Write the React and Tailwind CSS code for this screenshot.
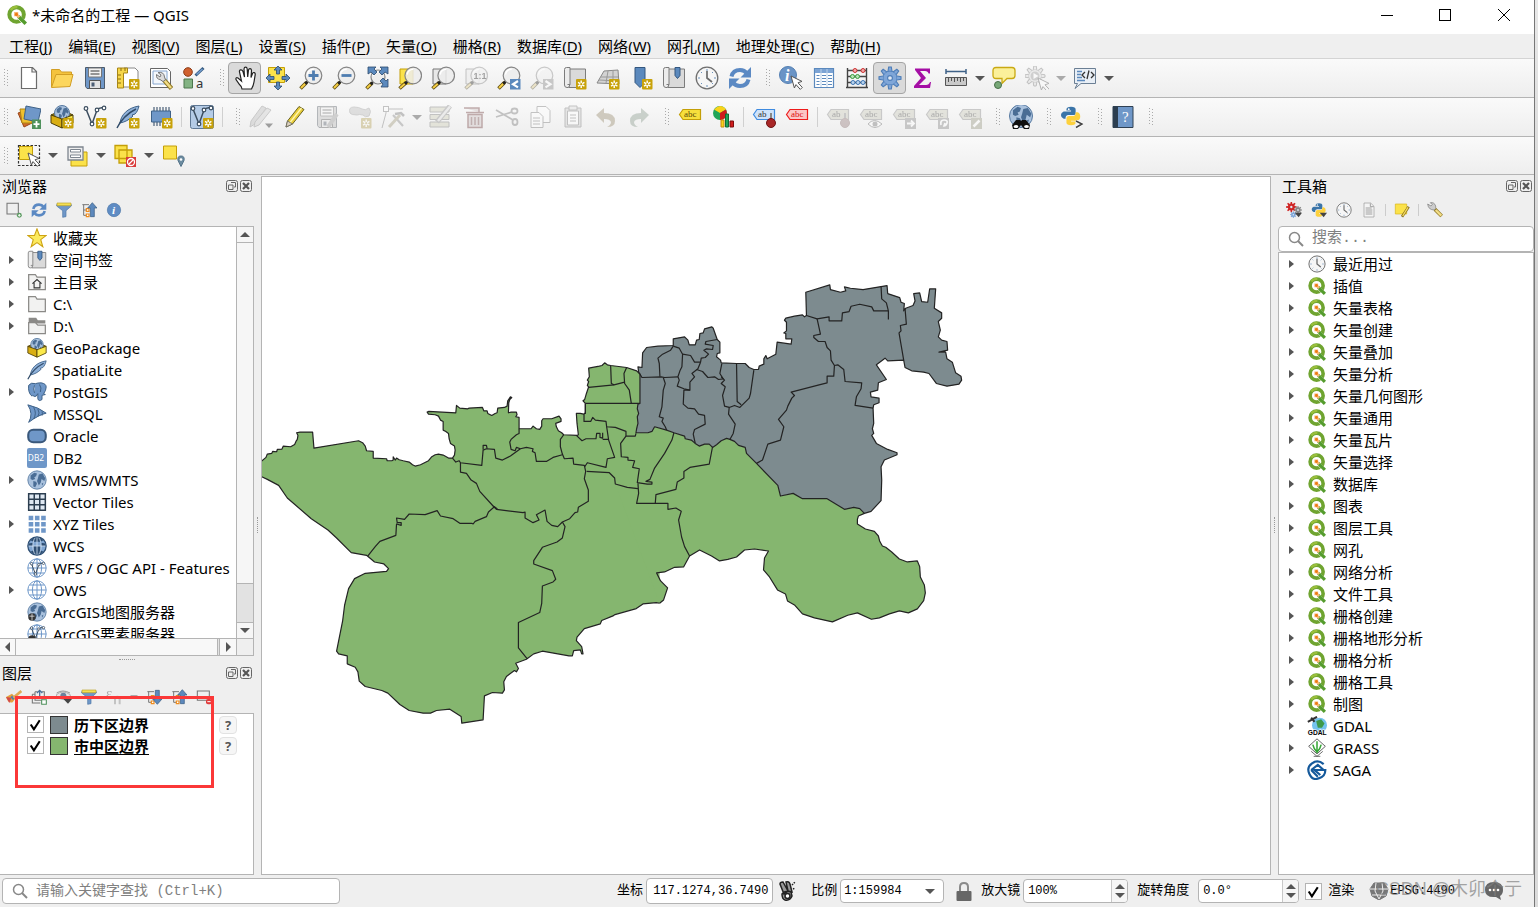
import { useState } from 'react';

const GREEN = '#85b66f';
const GREY = '#7d8b8f';

/* ---------- shared drawing parts ---------- */

function Badge({ x = 13, y = 13 }) {
  return (
    <g transform={`translate(${x} ${y})`}>
      <rect width="10.5" height="10.5" rx="1" fill="#c8a20a" />
      <path d="M5.2 1.5v7.5M2 3.4l6.4 3.7M8.4 3.4L2 7.1" stroke="#fff" strokeWidth="1.4" />
      <circle cx="5.2" cy="5.2" r="1.1" fill="#c8a20a" />
    </g>
  );
}

function Lens({ cx = 14.5, cy = 9.5, r = 8.3, children }) {
  const hx = cx - r * 0.7;
  const hy = cy + r * 0.7;
  return (
    <g>
      <path d={`M${hx - 1} ${hy + 1}L1.5 22.5`} stroke="#5b4a10" strokeWidth="3.6" />
      <path d={`M${hx - 2.5} ${hy + 2.5}L2 22`} stroke="#f6cf45" strokeWidth="2" />
      <path d={`M${hx} ${hy}l-2.4 2.4`} stroke="#222" strokeWidth="2.6" />
      <circle cx={cx} cy={cy} r={r} fill="#ececec" fillOpacity="0.85" stroke="#858585" strokeWidth="1.2" />
      <path d={`M${cx - r + 2.2} ${cy - 1}a${r - 2} ${r - 2} 0 0 1 ${r - 2} -${r - 3}`} fill="none" stroke="#fff" strokeWidth="1.6" />
      {children}
    </g>
  );
}

function Cursor({ x = 11, y = 10 }) {
  return <path transform={`translate(${x} ${y})`} d="M0 0l11 5.4-4 1.4 4.3 4.6-2 2L5 8.6 3.4 12z" fill="#fff" stroke="#555" strokeWidth="1" />;
}

function GlobeLand({ cx = 12, cy = 12, r = 10 }) {
  return (
    <g>
      <circle cx={cx} cy={cy} r={r} fill="#a9c1dd" stroke="#56789f" />
      <g transform={`translate(${cx - r} ${cy - r}) scale(${r / 10})`} fill="#4a6d95">
        <path d="M3 5l4-3 3 1-1 3-2 1 1 2-3 1-2-1z" />
        <path d="M6 11l3 1 1 2-2 4-2-1z" />
        <path d="M12 4l4-1 3 5-1 3-3-2-1 4-2 3-2-5 1-3z" />
        <path d="M15 14l2-1-1 3z" />
      </g>
    </g>
  );
}

function GlobeGrid({ fill = '#fff', stroke = '#6e97c9' }) {
  return (
    <g fill="none" stroke={stroke} strokeWidth="1.2">
      <circle cx="12" cy="12" r="11" fill={fill} />
      <ellipse cx="12" cy="12" rx="5.5" ry="11" />
      <path d="M1 12h22M12 1v22M3.5 6h17M3.5 18h17" />
    </g>
  );
}

function Box() {
  return (
    <g>
      <path d="M1 10l11-5 11 5-11 4z" fill="#a8870f" stroke="#4d3f08" />
      <GlobeLand cx={12} cy={8} r={7.5} />
      <path d="M1 10l11 4v9L1 18z" fill="#d9ae13" stroke="#4d3f08" />
      <path d="M23 10l-11 4v9l11-5z" fill="#fbe94b" stroke="#4d3f08" />
    </g>
  );
}

function Feather() {
  return (
    <g>
      <path d="M4 18C5 10 11 3 23 1c-1 4-2 6-4 8l-3 1 1 1c-4 4-8 6-13 7z" fill="#8fb1d9" stroke="#3f6288" />
      <path d="M1 23C5 15 12 8 20 4" fill="none" stroke="#2f4a68" strokeWidth="1.4" />
    </g>
  );
}

function Gear({ cx, cy, r, fill, stroke = 'none' }) {
  return (
    <g transform={`translate(${cx} ${cy}) scale(${r / 10})`} fill={fill} stroke={stroke}>
      {[0, 45, 90, 135, 180, 225, 270, 315].map(a => (
        <path key={a} transform={`rotate(${a})`} d="M-2 -5L-1.2 -10h2.4L2 -5z" />
      ))}
      <circle r="6" />
      <circle r="6" stroke="none" />
      <circle r="2.2" fill="#dfe8f3" />
    </g>
  );
}

function Tag({ text = 'abc', fill = '#f7df3c', stroke = '#c49f08', color = '#5a4b08' }) {
  return (
    <g>
      <path d="M1.5 9.5L5 4.500H22.500V14.500H5z" fill={fill} stroke={stroke} strokeWidth="1.2" />
      <text x="6" y="12.200" fontSize="9" fontFamily="Liberation Serif, serif" fill={color}>{text}</text>
    </g>
  );
}

function Python() {
  return (
    <g>
      <path d="M7 10V5q0-3 5-3t5 3v4q0 2-2 2H9q-3 0-3 4H4q-3-1-3-4t3-4h8V6H7z" fill="#3a74a8" />
      <path d="M17 8h2q3 1 3 4.500t-3 4.500h-7v1h5v1q0 3-5 3t-5-3v-4q0-3 3-3h5q2 0 2-3z" fill="#fdd13d" />
      <circle cx="9.500" cy="4.500" r="1" fill="#fff" />
    </g>
  );
}

function Layered({ up }) {
  return (
    <g>
      <path d="M2 4h10M4 4v16h5M4 12h5" fill="none" stroke="#777" strokeWidth="1.500" />
      <path d="M8 10h4v4H8zM8 18h4v4H8z" fill="#fff" stroke="#f08c1c" strokeWidth="1.800" />
      <path d={up ? 'M17 1l7 8h-4v13h-6V9h-4z' : 'M17 23l7-8h-4V2h-6v13h-4z'} fill="#5d89bd" stroke="#34577f" />
    </g>
  );
}

function QLogo() {
  return (
    <g>
      <circle cx="11.500" cy="11.500" r="8.700" fill="none" stroke="#6fa430" strokeWidth="4.800" />
      <path d="M4.500 6q3-4 8-3.500" fill="none" stroke="#9bbf3b" strokeWidth="3" />
      <path d="M15 12.500l8.500 8.500M12 15.500l8.500 8.500" stroke="#fff" strokeWidth="1" />
      <path d="M13.500 13.500l9 9" stroke="#559c2e" strokeWidth="4.200" />
      <path d="M8.500 8.500h5v2.500l2.500 2.500-2.500 2.500-2.500-2.500H8.500z" fill="#f7b877" />
      <circle cx="11.300" cy="11.300" r="1.900" fill="#ee7913" />
    </g>
  );
}

function Pencil({ fill = '#e8cd3a' }) {
  return (
    <g>
      <path d="M4 22l1.500-6L17 1.500l5 3L10.500 19z" fill={fill} stroke="#6b6320" />
      <path d="M8 17.500L19.500 3" stroke="#fff6b0" strokeWidth="1.300" />
      <path d="M4 22l1.500-6 5 3z" fill="#dcd2c0" stroke="#666" strokeWidth=".8" />
    </g>
  );
}

function Scroll() {
  return (
    <g stroke="#7c7c7c">
      <path d="M6 3h16.500v18.500H6z" fill="#dadada" />
      <path d="M3.500 1.500h3.500v17l-1.500 3H4q-2.500 0-2.500-2.500V3.500q0-2 2-2z" fill="#ececec" />
      <path d="M4.500 18.500H7" />
    </g>
  );
}

function Floppy({ fill = '#6f97c8' }) {
  return (
    <g>
      <path d="M2.500 1.500h19v21H4l-1.500-2z" fill={fill} stroke="#4c5b6b" />
      <path d="M5.500 2h13v9h-13z" fill="#f2f2f2" stroke="#777" />
      <path d="M7.500 5h9M7.500 8h9" stroke="#777" strokeWidth="1.400" />
      <path d="M6.500 14.500h11v8h-11z" fill="#e3e3e3" stroke="#555" />
      <path d="M8.500 16.500h3v4h-3z" fill="#4b5d75" />
    </g>
  );
}

function Vee({ color = '#3b4d5f' }) {
  return (
    <g fill="none" stroke={color} strokeWidth="1.500">
      <path d="M3 4l6 15 5-14q2-3 7-2" />
      <g fill="#fff" strokeWidth="1.200">
        <circle cx="3" cy="3.500" r="1.800" /><circle cx="9" cy="19" r="1.800" /><circle cx="14" cy="5" r="1.800" /><circle cx="21" cy="3" r="1.800" />
      </g>
    </g>
  );
}

function Funnel() {
  return (
    <g>
      <path d="M1 4h22v2l-8 7v9l-5 1V13L1 6z" fill="#6f97c8" stroke="#4d77a8" />
      <path d="M1.500 1.500h21v4h-21z" fill="#f4df53" stroke="#bda32a" />
    </g>
  );
}

function Clock() {
  return (
    <g>
      <circle cx="12" cy="12" r="10.800" fill="#f6f6f6" stroke="#6f6f6f" strokeWidth="1.300" />
      <path d="M12 3v2M12 19v2M3 12h2M19 12h2M6 6l1 1M18 6l-1 1M6 18l1-1M18 18l-1-1" stroke="#6b91bb" />
      <path d="M12 5v7l5 4" fill="none" stroke="#6b6b6b" strokeWidth="1.700" />
    </g>
  );
}

function Refresh() {
  const half = (
    <>
      <path d="M3.500 10.500Q5 4 12 4q4.500 0 7 3.500" fill="none" stroke="#5b89c3" strokeWidth="4" />
      <path d="M23 1v10.500H12.500z" fill="#5b89c3" />
    </>
  );
  return (
    <g>
      {half}
      <g transform="rotate(180 12 12)">{half}</g>
    </g>
  );
}

function Folder({ children }) {
  return (
    <g>
      <path d="M2 3h8l2 3h10v15H2z" fill="#f2f2f1" stroke="#8b8a87" strokeWidth="1.500" />
      {children}
    </g>
  );
}

const icons = {
  logo: <QLogo />,
  newFile: <path d="M4.500 1.500h11l4 4v17h-15zM15 1.500V6h4.500" fill="#fff" stroke="#6c6c6c" strokeWidth="1.200" />,
  open: (
    <g stroke="#d29e24">
      <path d="M1.500 21V3.500h8l2 2.500h10v4" fill="#f4c33d" />
      <path d="M1.500 21.500L6 8.500h17l-3 12z" fill="#fcd65d" />
    </g>
  ),
  save: <Floppy />,
  newLayout: (
    <g>
      <path d="M8 2h11l3 3v16H5V5z" fill="#fff" stroke="#888" />
      <path d="M1.500 2h10v5h-4v15h-6z" fill="#f6d64a" stroke="#a78516" />
      <path d="M2 9h3M2 13h3M2 17h3M5 2v3M9 2v3" stroke="#8a6d10" />
      <Badge />
    </g>
  ),
  layouts: (
    <g>
      <path d="M1.500 2.500h17l3 3v16h-20z" fill="#fff" stroke="#666" />
      <path d="M4 5h14v13H4z" fill="#f3f7fc" stroke="#86a6cf" />
      <path d="M15 14l7.500 8.500" stroke="#8f7722" strokeWidth="4.500" /><path d="M15.500 14.500l6.500 7.500" stroke="#f2dd86" strokeWidth="2.600" />
      <path d="M9 6.500q6-1 6.500 4.500l1 3-2.500 1.500-3-2Q7 13 7.500 8.500l3.500 2.500 1-2z" fill="#dcdcdc" stroke="#777" />
    </g>
  ),
  style: (
    <g>
      <circle cx="6" cy="6" r="4.300" fill="#d0612f" stroke="#8b3b17" />
      <path d="M13.500 9.500l8-7.500" stroke="#34597f" strokeWidth="3" /><path d="M14.500 8.500L20.500 3" stroke="#739dce" strokeWidth="1.600" />
      <path d="M2 13h8.500v9H2z" fill="#83b383" stroke="#4d764d" />
      <text x="14" y="22" fontSize="13" fontFamily="Noto Sans, sans-serif" fill="#333">a</text>
    </g>
  ),
  hand: <path d="M9 23q0-2.500-2.500-4.500L3 13.500q-.500-2.500 2-1.500l3.500 3L6.500 6q-.300-2 1.200-2.200T10 5.500l1.500 5.500-.500-8q.200-1.800 1.600-1.800T14.200 3L14.700 11l.800-7q.400-1.600 1.700-1.400T18.500 4.500L18 11.500l1.500-4q.700-1.300 1.800-.900t.900 2L21 16q-.500 3.500-2.500 7z" fill="#fff" stroke="#222" strokeWidth="1.200" />,
  panSel: (
    <g>
      <path d="M2.500 1.500h16v15h-16z" fill="#fbe24a" stroke="#c49f08" />
      <g fill="#5b89bd" stroke="#2b4a6d" strokeWidth=".8">
        <path d="M12 0l4 4h-2.500v4h-3V4H8zM12 24l4-4h-2.500v-4h-3v4H8zM0 12l4-4v2.500h4v3H4V16zM24 12l-4-4v2.500h-4v3h4V16z" />
      </g>
    </g>
  ),
  zoomIn: <Lens><path d="M14.500 4.500v10M9.500 9.500h10" stroke="#4f7db0" strokeWidth="2.800" /></Lens>,
  zoomOut: <Lens><path d="M9.500 9.500h10" stroke="#4f7db0" strokeWidth="2.800" /></Lens>,
  zoomFull: (
    <g>
      <Lens cx={13} cy={11} r={7} />
      <g fill="#5b89bd" stroke="#2b4a6d" strokeWidth=".8">
        <path d="M3 1h8L9 3l3 3-3 3-3-3-3 2zM23 1h-8l2 2-3 3 3 3 3-3 3 2zM23 21v-8l-2 2-3-3-3 3 3 3-2 3z" />
      </g>
    </g>
  ),
  zoomSel: <g><path d="M2 3h13v15H2z" fill="#fbe24a" stroke="#c49f08" /><Lens cx={15.200} /></g>,
  zoomLayer: <g><path d="M2 3h13v15H2z" fill="#e8e8e8" stroke="#777" /><Lens cx={15.200} /></g>,
  zoomNative: <g><path d="M2 3h13v15H2z" fill="#e8e8e8" stroke="#777" /><Lens cx={15.200}><text x="9.500" y="12.500" fontSize="9" fontWeight="bold" fontFamily="Liberation Sans, sans-serif" fill="#222">1:1</text></Lens></g>,
  zoomLast: <g><Lens /><path d="M13 13h10.500v10.500H13z" fill="#5b89bd" /><path d="M21 15l-5 3.200 5 3.200" fill="none" stroke="#fff" strokeWidth="2.200" /></g>,
  zoomNext: <g><Lens /><path d="M13 13h10.500v10.500H13z" fill="#888" /><path d="M15.500 15l5 3.200-5 3.200" fill="none" stroke="#fff" strokeWidth="2.200" /></g>,
  newMap: <g><Scroll /><Badge /></g>,
  new3d: <g><path d="M1 17L8 5l14-1 1 14z" fill="#d3d3d3" stroke="#888" /><path d="M5 11l17 0M12 5l-2 12M17 4l0 13M3 14l19 1" stroke="#999" fill="none" /><Badge /></g>,
  newBookmark: <g><path d="M6 1.500h10v15l-5 5-5-5z" fill="#5b89bd" stroke="#34577f" /><Badge /></g>,
  bookmarks: <g><Scroll /><path d="M13 1.500h5v8l-2.500 3-2.500-3z" fill="#5b89bd" stroke="#34577f" /></g>,
  clock: <Clock />,
  refresh: <Refresh />,
  identify: (
    <g>
      <circle cx="9" cy="9" r="8.500" fill="#6a94c6" stroke="#5580b3" />
      <text x="6" y="14.500" fontSize="16" fontStyle="italic" fontWeight="bold" fontFamily="Liberation Serif, serif" fill="#fff">i</text>
      <Cursor x={12} />
    </g>
  ),
  table: (
    <g>
      <path d="M2.500 2.500h19v19h-19z" fill="#fff" stroke="#5b89bd" strokeWidth="1.200" />
      <path d="M3 3h18v4H3z" fill="#7ba3d4" />
      <path d="M9 3v18M15 3v18" stroke="#b8cfe8" />
      <path d="M4.500 9.500h3M4.500 12.500h3M4.500 15.500h3M4.500 18.500h3M10 9.500h4M10 12.500h4M10 15.500h4M10 18.500h4M16 9.500h4M16 12.500h4M16 15.500h4M16 18.500h4" stroke="#5b89bd" strokeWidth="1.200" />
    </g>
  ),
  abacus: (
    <g>
      <path d="M2.500 2v20M21.500 2v20M1 21.500h22M2 4.500h20M2 10.500h20M2 16.500h20" stroke="#444" strokeWidth="1.400" />
      <g stroke="#c33" fill="#f3a6a6"><circle cx="10" cy="4.500" r="2" /><circle cx="18" cy="4.500" r="2" /></g>
      <g stroke="#3b9a3b" fill="#b9e6b9"><circle cx="7.500" cy="10.500" r="2" /><circle cx="12.500" cy="10.500" r="2" /></g>
      <g stroke="#3f77b5" fill="#b9d3ee"><circle cx="8" cy="16.500" r="2" /><circle cx="13" cy="16.500" r="2" /><circle cx="18" cy="16.500" r="2" /></g>
    </g>
  ),
  gear: <Gear cx={12} cy={12} r={11} fill="#7fa6d8" stroke="#4d7db8" />,
  sigma: <path d="M4 2.500h15v5h-1.500Q17 5 14 5H9l6 7-7 7h7q3 0 4-3h1l-1 6H3v-2l7-8-6-8z" fill="#a50fa5" />,
  measure: (
    <g>
      <path d="M2 5.500h20M2 3v5M22 3v5" stroke="#3f6288" strokeWidth="1.500" />
      <path d="M1.500 11.500h21v8h-21z" fill="#c9c9c9" stroke="#555" />
      <path d="M4.500 12v4M7.500 12v3M10.500 12v4M13.500 12v3M16.500 12v4M19.500 12v3" stroke="#555" />
    </g>
  ),
  tips: (
    <g>
      <path d="M4 1.500h16q3 0 3 3v5q0 3-3 3h-5l-5 5v-5H4q-3 0-3-3v-5q0-3 3-3z" fill="#fbf09a" stroke="#c9a913" strokeWidth="1.300" />
      <circle cx="6" cy="19" r="3.500" fill="#78a878" stroke="#476f47" />
    </g>
  ),
  action: <g><Gear cx={10} cy={10} r={10} fill="#ddd" stroke="#777" /><circle cx="10" cy="10" r="4.500" fill="#999" /><path d="M8.500 7l5 3-5 3z" fill="#fff" /><Cursor x={13} y={12} /></g>,
  annotate: (
    <g>
      <path d="M1.500 2.500h21v15H8l-6 5 2.500-5h-3z" fill="#e9eff6" stroke="#6b7f94" />
      <path d="M4 5.500h5M4 8.500h4M4 11.500h5M4 14.500h8" stroke="#5b89bd" strokeWidth="1.400" />
      <path d="M12 6l-3 3 3 3M18 6l3 3-3 3M16 4.500l-2 8.500" fill="none" stroke="#333" strokeWidth="1.300" />
    </g>
  ),
  dataSource: (
    <g>
      <path d="M1 8l10-3 4 13-8 4z" fill="#d06a2b" stroke="#99481a" />
      <path d="M3 4h12v14H5z" fill="#f0c02e" stroke="#ad8414" />
      <path d="M9 1l15 3-3 13-14-3z" fill="#6f97c8" stroke="#3f6288" />
      <path d="M15 14.500h9V24h-9z" fill="#4f915c" /><path d="M19.500 16v6.500M16.500 19.200h6" stroke="#fff" strokeWidth="1.800" />
    </g>
  ),
  geopackage: <Box />,
  newGeopackage: <g><Box /><Badge /></g>,
  newShape: <g><Vee /><Badge /></g>,
  feather: <Feather />,
  newSpatialite: <g><Feather /><Badge /></g>,
  newScratch: (
    <g>
      <path d="M5 2v19M8 2v19M11 2v19M14 2v19M17 2v19M20 2v19" stroke="#4a5f78" strokeWidth="1.200" />
      <path d="M2.500 6h19v11h-19z" fill="#6f97c8" stroke="#3f6288" /><Badge />
    </g>
  ),
  virtual: (
    <g>
      <rect x=".500" y=".500" width="23" height="23" rx="2" fill="#b4cbe6" stroke="#5f7894" /><Vee /><Badge />
    </g>
  ),
  pencils: <g><path d="M1 22l1-6L13 1l4 2L6 19z" fill="#bbb" stroke="#888" /><path d="M5 22l1-5L18 3l4 2L10 20z" fill="#ccc" stroke="#888" /><path d="M16 18.500h8L20 23z" fill="#222" /></g>,
  pencil: <Pencil />,
  saveEdits: <g><Floppy fill="#bbb" /><path d="M13 22L22 9" stroke="#999" strokeWidth="4" /></g>,
  addFeature: <g><path d="M2 8Q0 2 6 2q5 0 8 2t7-1q3 3 0 8-4 2-6-1-4-1-6 0-6 0-7-2z" fill="#bbb" stroke="#999" /><Badge /></g>,
  vertex: (
    <g>
      <path d="M5 4v4L1 23M5 4h17" stroke="#777" fill="none" /><rect x="2.500" y="1.500" width="5" height="5" fill="#fff" stroke="#777" />
      <path d="M12 10l10 11" stroke="#888" strokeWidth="2.200" /><path d="M19 10L8 22" stroke="#a99a60" strokeWidth="3" /><path d="M14 9l6-1 3 3" stroke="#777" strokeWidth="2.500" fill="none" />
    </g>
  ),
  editRows: <g><path d="M1 2h19v5H1zM1 9.500h19v5H1zM1 17h19v5H1z" fill="#cfcfa0" stroke="#777" /><path d="M8 17L21 1" stroke="#888" strokeWidth="5" /><path d="M9 16L21 1.500" stroke="#ddd" strokeWidth="2.500" /></g>,
  trash: <g><path d="M2 3h15v4M4 7.500h18M6 9.500h14v13H6z" fill="#d5bcbc" stroke="#933" strokeWidth="1.500" /><path d="M9.500 12v8M13 12v8M16.500 12v8" stroke="#944" strokeWidth="1.500" /></g>,
  cut: <g fill="none" stroke="#777" strokeWidth="1.800"><path d="M1 5l17 10M1 12l16-5" /><ellipse cx="19.500" cy="6" rx="3" ry="2.500" /><ellipse cx="20" cy="17" rx="2.500" ry="3" /></g>,
  copy: <g fill="#fff" stroke="#777"><path d="M9 1.500h9l4 4v12H9z" /><path d="M3 7.500h8l4 4v11H3z" /><path d="M5 13h7M5 16h7M5 19h7" /></g>,
  paste: <g stroke="#777"><path d="M4 3h16v19H4z" fill="#ccc" /><path d="M6.500 6h11v14h-11z" fill="#fff" /><path d="M8 1h8v4H8z" fill="#ddd" /><path d="M9 10h6M9 13h6M9 16h6" /></g>,
  undo: <path d="M2 10l8-7v5q11 0 11 8 0 6-8 6 4-2 4-5-1-3-7-3v4z" fill="#a58a50" />,
  redo: <path d="M22 10l-8-7v5Q3 8 3 16q0 6 8 6-4-2-4-5 1-3 7-3v4z" fill="#7ea084" />,
  label: <Tag />,
  diagram: (
    <g>
      <circle cx="9" cy="8" r="7" fill="#20a558" /><path d="M9 8L3 4.500Q6 1 9 1q4 0 6 3.500z" fill="#f9d31b" /><path d="M9 8l6-3.500Q17 9 14 13q-2 2-5 2z" fill="#cf1d1d" />
      <path d="M10 15h3v7h-3z" fill="#f9d31b" stroke="#c88a10" /><path d="M14.500 9h3v13h-3z" fill="#20a558" stroke="#116b36" /><path d="M19 16h3.500v6H19z" fill="#cf1d1d" stroke="#7d0f0f" />
    </g>
  ),
  pinLabel: <g><Tag text="ab" fill="#cfe3fa" stroke="#3f8be0" color="#333" /><path d="M19 8v8" stroke="#888" strokeWidth="2" /><circle cx="19" cy="18" r="4.500" fill="#a82727" stroke="#701414" /></g>,
  hideLabel: <Tag fill="#fbc6c6" stroke="#ee1c1c" color="#d11" />,
  tagPin: <g><Tag text="ab" fill="#c8c8a8" stroke="#888" color="#333" /><path d="M19 8v8" stroke="#888" strokeWidth="2" /><circle cx="19" cy="18" r="4.500" fill="#a77" stroke="#966" /></g>,
  tagEye: <g><Tag fill="#c8c8a8" stroke="#888" color="#333" /><path d="M9 19q6-7 14 0-7 7-14 0z" fill="#fff" stroke="#666" /><circle cx="16" cy="19" r="2.500" fill="#777" /></g>,
  tagMove: <g><Tag fill="#c8c8a8" stroke="#888" color="#333" /><path d="M13 13h11v11H13z" fill="#888" /><path d="M15 18.500h7m-3-3l3 3-3 3" stroke="#fff" strokeWidth="1.800" fill="none" /></g>,
  tagRotate: <g><Tag fill="#c8c8a8" stroke="#888" color="#333" /><path d="M13 13h11v11H13z" fill="#888" /><path d="M16 20q-1-5 3-5t3 3-3 3l1-3" stroke="#fff" strokeWidth="1.700" fill="none" /></g>,
  tagEdit: <g><Tag fill="#c8c8a8" stroke="#888" color="#333" /><path d="M13 13h11v11H13z" fill="#999970" /><path d="M15.500 21.500l6-6" stroke="#fff" strokeWidth="2.500" /></g>,
  metasearch: (
    <g>
      <GlobeLand cx={12} cy={11} r={11.500} />
      <path d="M3 20l4-5h4l1 1 1-1h4l4 5-1 4h-5l-3-4-3 4H4z" fill="#111" /><ellipse cx="7" cy="21.500" rx="2.400" ry="1.600" fill="#fff" /><ellipse cx="17.500" cy="21.500" rx="2.400" ry="1.600" fill="#fff" />
    </g>
  ),
  python: <Python />,
  console: <g><g transform="scale(.92)"><Python /></g><path d="M16 16l6 3-6 3.500" fill="none" stroke="#fff" strokeWidth="3" /><path d="M16 16l6 3-6 3.500" fill="none" stroke="#444" strokeWidth="1.500" /></g>,
  help: (
    <g>
      <path d="M2 1.500h20v21H2z" fill="#6f97c8" stroke="#2f4053" /><path d="M2 1.500h5v21H2z" fill="#2c3e50" />
      <text x="11" y="17" fontSize="15" fontFamily="Liberation Serif, serif" fill="#fff">?</text>
    </g>
  ),
  select: (
    <g>
      <path d="M1.500 1.500h21v20h-21z" fill="none" stroke="#333" strokeDasharray="2.500 1.500" strokeWidth="1.200" />
      <path d="M2.500 2.500h13v13h-13z" fill="#fbe24a" stroke="#c49f08" /><Cursor x={11} y={9} />
    </g>
  ),
  selectForm: (
    <g>
      <path d="M8 8h14v14H6V15z" fill="#fbe24a" stroke="#c49f08" /><path d="M3 3h15v13H3z" fill="#eee" stroke="#7d858f" strokeWidth="1.300" />
      <path d="M5.500 5.500h10v2.500h-10zM5.500 11h10v2.500h-10z" fill="#fff" stroke="#7d858f" />
    </g>
  ),
  deselect: (
    <g>
      <path d="M2 1.500h12v13H2zM6 6h13v13H6z" fill="#fbe24a" stroke="#c49f08" strokeWidth="1.300" />
      <path d="M13 13h10v10H13z" fill="#d93b3b" /><circle cx="18" cy="18" r="3.500" fill="none" stroke="#fff" strokeWidth="1.300" /><path d="M15.500 20.500l5-5" stroke="#fff" strokeWidth="1.300" />
    </g>
  ),
  selectLoc: (
    <g>
      <path d="M2.500 2h13v13h-13z" fill="#fbe24a" stroke="#c49f08" />
      <path d="M20 22.500l-3-6q-1-4.500 3-4.500t3 4.500z" fill="#6c8ca0" stroke="#55748a" /><circle cx="20" cy="15.500" r="1.300" fill="#fff" />
    </g>
  ),
  addRect: <g><path d="M1.500 2h17v16h-17z" fill="none" stroke="#777" strokeWidth="1.600" /><circle cx="20" cy="20" r="3.700" fill="#5c9c62" /><path d="M20 18v4M18 20h4" stroke="#fff" strokeWidth="1.300" /></g>,
  funnel: <Funnel />,
  collapse: <Layered up />,
  expand: <Layered />,
  info: <g><circle cx="12" cy="12" r="10" fill="#5f8cc4" stroke="#4d77a8" /><text x="9" y="18" fontSize="17" fontStyle="italic" fontWeight="bold" fontFamily="Liberation Serif, serif" fill="#fff">i</text></g>,
  star: <path d="M12 1l3 8h8l-6.500 5 2.500 8.500-7-5-7 5L7.500 14 1 9h8z" fill="#fcea5e" stroke="#cda313" strokeWidth="1.300" />,
  home: <Folder><path d="M6.500 14l5.500-5 5.500 5M8.500 13v6h7v-6" fill="none" stroke="#333" strokeWidth="1.300" /></Folder>,
  folder: <Folder />,
  drive: <g><path d="M2 2h9l2 3h9v4H2z" fill="#8b8a87" /><path d="M2 8h8l3 3h9v10H2z" fill="#f2f2f1" stroke="#8b8a87" strokeWidth="1.500" /></g>,
  postgis: <path d="M2 4q3-4 8-2 3-1 7-1 6 1 6 5 0 4-3 8l2 1-4 1v5q-4 3-5-1v-6l-2 3q-3 1-4-1l-1 1Q1 13 2 4zM9 4q-2 4 0 9M15 3q3 4 1 9" fill="#6f97c8" stroke="#3f6288" strokeWidth="1.200" />,
  mssql: <path d="M1 1q13 3 22 10-9 2-21 11Q8 12 1 1zM8 4q4 7 0 14M13 6q3 5 0 9M18 9q1 3 0 5" fill="#6f97c8" stroke="#3f6288" strokeWidth="1.200" />,
  oracle: <rect x="1.500" y="4.500" width="21" height="15" rx="6" fill="#6f97c8" stroke="#3a587b" strokeWidth="2.500" />,
  db2: <g><rect width="24" height="24" rx="2.500" fill="#6f97c8" /><text x="1" y="15.500" fontSize="10" fontFamily="Noto Sans, sans-serif" fill="#fff">DB2</text></g>,
  wms: <GlobeLand r={11} />,
  vtiles: <g stroke="#2c3e50" strokeWidth="1.800"><path d="M2 2h20v20H2z" fill="#dfe8f2" /><path d="M8.700 2v20M15.300 2v20M2 8.700h20M2 15.300h20" /></g>,
  xyz: <path d="M2 2h5.500v5.500H2zM9.500 2H15v5.500H9.500zM17 2h5.500v5.500H17zM2 9.500h5.500V15H2zM9.500 9.500H15V15H9.500zM17 9.500h5.500V15H17zM2 17h5.500v5.500H2zM9.500 17H15v5.500H9.500zM17 17h5.500v5.500H17z" fill="#6f97c8" />,
  wcs: (
    <g>
      <circle cx="12" cy="12" r="11" fill="#7fa5d1" />
      <path d="M4 5q8-7 16 0l-4 2H8zM2 11v-2l5-1v4H1zM22 11v-2l-5-1v4h6zM4 19q8 7 16 0l-4-2H8zM8 12h8v5H8z" fill="#2f4f73" />
      <path d="M12 1v22M1 12h22" stroke="#cfe0f2" /><ellipse cx="12" cy="12" rx="5" ry="11" fill="none" stroke="#cfe0f2" />
      <circle cx="12" cy="12" r="11" fill="none" stroke="#2f4f73" strokeWidth="1.500" />
    </g>
  ),
  wfs: <g><GlobeGrid /><g transform="translate(3 4) scale(.8)"><Vee /></g></g>,
  ows: <GlobeGrid />,
  arcMap: <g><GlobeLand r={11} /><circle cx="6" cy="18" r="4.500" fill="#333" /><path d="M3 17h6M6 14v8" stroke="#ddd" /></g>,
  arcFeat: <g><GlobeGrid /><g transform="translate(3 2) scale(.8)"><Vee /></g><circle cx="6" cy="18" r="4.500" fill="#333" /></g>,
  brush: <g><path d="M0 12l9-5 6 6-5 7Q3 22 0 12z" fill="#e6a03c" /><path d="M0 12l5 9 3-8z" fill="#d34a4a" /><path d="M8 11l4 4" stroke="#4f7db0" strokeWidth="4" /><path d="M11 13l12-10" stroke="#e0aa55" strokeWidth="4" /></g>,
  addGroup: <g fill="none" stroke="#777" strokeWidth="1.600"><path d="M2 8v13h12M6 4v13h12M6 4h4M16 4h4v10M2 8h4" /><path d="M13 14V2M9 6l4-4 4 4" stroke="#4a6f9b" strokeWidth="2" /><path d="M16 16h7v7h-7z" fill="#fff" stroke="#4f915c" /></g>,
  eye: <g><path d="M0 9q10-9 22 0-4 7-11 7T0 9z" fill="#e5e5e5" stroke="#999" /><path d="M1 6q9-6 20 0" stroke="#999" strokeWidth="1.500" /><circle cx="11" cy="10" r="4.500" fill="#6b829c" /><path d="M11 15h13l-6 7z" fill="#444" /></g>,
  epsilon: <g><text x="0" y="14" fontSize="22" fontFamily="Liberation Serif, serif" fill="#666">ε</text><path d="M12 23v-8q0-5 5-5t5 5v8h-3v-7q0-3-2-3t-2 3v7z" fill="#999" /></g>,
  removeRect: <g><path d="M2 3h18v14H2z" fill="none" stroke="#777" strokeWidth="1.600" /><rect x="15" y="15" width="9" height="8" rx="3" fill="#e03c3c" /><path d="M17 19h5" stroke="#fff" strokeWidth="1.500" /></g>,
  models: <g><Gear cx={8} cy={7.500} r={8} fill="#cf2525" /><Gear cx={18} cy={12} r={6} fill="#888" /><Gear cx={11} cy={19} r={5} fill="#7fa6d8" /><path d="M13 16h11l-5 7z" fill="#444" /></g>,
  pyMenu: <g><Python /><path d="M13 16h11l-5 7z" fill="#444" /></g>,
  doc: <g><path d="M4.500 1.500h10l5 5v16h-15z" fill="#f4f4f4" stroke="#999" /><path d="M14 2v5h5M7 9h9M7 12h10M7 15h10M7 18h10" stroke="#999" fill="none" strokeWidth="1.400" /></g>,
  editNote: <g><path d="M2 3h17v15H2z" fill="#fbe24a" stroke="#d8b417" /><path d="M12 22L22 7" stroke="#8a7220" strokeWidth="4" /><path d="M13 21l8-13" stroke="#f6dd5c" strokeWidth="2" /></g>,
  wrench: <g><path d="M1 3l5 3 2-2-3-3q6-1 8 5v4l-2 2Q2 12 1 3z" fill="#ccc" stroke="#777" /><path d="M12 11l10 10" stroke="#8f7722" strokeWidth="5.500" /><path d="M13 12l8.500 8.500" stroke="#f2dd86" strokeWidth="3.500" /></g>,
  gdal: (
    <g>
      <circle cx="15" cy="11" r="9" fill="#74c3ee" /><path d="M11 6l6-2 4 5-3 5h-5z" fill="#3e9a4a" /><path d="M1 7L12 1M5 2l4 5" stroke="#333" strokeWidth="2.500" />
      <text x="1" y="23" fontSize="8" fontWeight="bold" fontFamily="Liberation Sans, sans-serif" fill="#000" stroke="#fff" strokeWidth="1.500" paintOrder="stroke">GDAL</text>
    </g>
  ),
  grass: <g><path d="M12 1l10 9-10 9L2 10z" fill="#fff" stroke="#444" /><path d="M5 16l7 6 7-6M8 22h8" fill="none" stroke="#555" /><path d="M12 18V4M12 17Q8 13 7 8M12 17q4-4 5-9" stroke="#35a535" strokeWidth="1.800" fill="none" /></g>,
  saga: <g fill="none" stroke="#15599b" strokeWidth="2.600"><path d="M20 5Q13-1 6 4T3 17t11 5q8-2 8-10H9l7 6M5 12l8-6 7 6M5 12l8 8" /></g>,
};

function Icon({ name, className = 'w-6 h-6' }) {
  return <svg viewBox="0 0 24 24" className={`shrink-0 ${className}`} fill="none" aria-hidden="true">{icons[name]}</svg>;
}

function Handle({ first }) {
  return (
    <div className={`flex justify-end pr-1 shrink-0 ${first ? 'w-3' : 'w-[18px]'}`}>
      <svg viewBox="0 0 4 18" className="w-1 h-[18px]">
        {[0, 3, 6, 9, 12, 15].map(y => <path key={y} d={`M0 ${y}h1v1H0zM3 ${y + 1}h1v1H3z`} fill="#aaa" />)}
      </svg>
    </div>
  );
}

function Tool({ name, off, on }) {
  return (
    <button disabled={off} aria-label={name} className={`w-[33px] h-8 shrink-0 flex items-center justify-center ${on ? 'bg-[#dadada] border border-[#a5a5a5] rounded-sm' : ''}`}>
      <Icon name={name} className={off ? 'w-6 h-6 opacity-40 saturate-50' : 'w-6 h-6'} />
    </button>
  );
}

function Toolbar({ items, height = 'h-[39px]' }) {
  return (
    <div role="toolbar" className={`flex items-center shrink-0 border-b border-[#b4b4b4] bg-linear-to-b from-[#fafafa] to-[#eeeeee] ${height}`}>
      <Handle first />
      {items.map((it, i) => {
        if (it === '::') return <Handle key={i} />;
        if (it === '|') return <div key={i} className="w-2 shrink-0 flex justify-center"><span className="w-px h-5 bg-[#d0d0d0]" /></div>;
        if (it === 'v' || it === 'v-') {
          return (
            <button key={i} aria-label="menu" className="w-[15px] h-8 shrink-0 flex items-center justify-center">
              <span className={`border-x-[5px] border-t-[5px] border-x-transparent ${it === 'v' ? 'border-t-[#555]' : 'border-t-[#aaa]'}`} />
            </button>
          );
        }
        return <Tool key={i} name={it.replace(/[-+]$/, '')} off={it.endsWith('-')} on={it.endsWith('+')} />;
      })}
    </div>
  );
}

const row1 = ['newFile', 'open', 'save', 'newLayout', 'layouts', 'style', '::', 'hand+', 'panSel', 'zoomIn', 'zoomOut', 'zoomFull', 'zoomSel', 'zoomLayer', 'zoomNative-', 'zoomLast', 'zoomNext-', 'newMap', 'new3d', 'newBookmark', 'bookmarks', 'clock', 'refresh', '::', 'identify', 'table', 'abacus', 'gear+', 'sigma', 'measure', 'v', 'tips', 'action-', 'v-', 'annotate', 'v'];
const row2 = ['dataSource', 'newGeopackage', 'newShape', 'newSpatialite', 'newScratch', '|', 'virtual', '|', '::', 'pencils-', 'pencil', 'saveEdits-', 'addFeature-', 'vertex-', 'v-', 'editRows-', 'trash-', 'cut-', 'copy-', 'paste-', 'undo-', 'redo-', '::', 'label', 'diagram', '|', 'pinLabel', 'hideLabel', '|', 'tagPin-', 'tagEye-', 'tagMove-', 'tagRotate-', 'tagEdit-', '::', 'metasearch', '::', 'console', '::', 'help', '::'];
const row3 = ['select', 'v', 'selectForm', 'v', 'deselect', 'v', 'selectLoc'];

const menus = [['工程', 'J'], ['编辑', 'E'], ['视图', 'V'], ['图层', 'L'], ['设置', 'S'], ['插件', 'P'], ['矢量', 'O'], ['栅格', 'R'], ['数据库', 'D'], ['网络', 'W'], ['网孔', 'M'], ['地理处理', 'C'], ['帮助', 'H']];

const browserItems = [
  ['star', '收藏夹'], ['bookmarks', '空间书签', 1], ['home', '主目录', 1], ['folder', 'C:\\', 1], ['drive', 'D:\\', 1],
  ['geopackage', 'GeoPackage'], ['feather', 'SpatiaLite'], ['postgis', 'PostGIS', 1], ['mssql', 'MSSQL'], ['oracle', 'Oracle'],
  ['db2', 'DB2'], ['wms', 'WMS/WMTS', 1], ['vtiles', 'Vector Tiles'], ['xyz', 'XYZ Tiles', 1], ['wcs', 'WCS'],
  ['wfs', 'WFS / OGC API - Features'], ['ows', 'OWS', 1], ['arcMap', 'ArcGIS地图服务器'], ['arcFeat', 'ArcGIS要素服务器'],
];

const toolboxItems = [
  ['clock', '最近用过'],
  ...['插值', '矢量表格', '矢量创建', '矢量叠加', '矢量分析', '矢量几何图形', '矢量通用', '矢量瓦片', '矢量选择', '数据库', '图表', '图层工具', '网孔', '网络分析', '文件工具', '栅格创建', '栅格地形分析', '栅格分析', '栅格工具', '制图'].map(t => ['logo', t]),
  ['gdal', 'GDAL'], ['grass', 'GRASS'], ['saga', 'SAGA'],
];

function Arrow({ show }) {
  return <span className={`border-y-4 border-l-[5px] border-y-transparent shrink-0 ${show ? 'border-l-[#555]' : 'border-l-transparent'}`} />;
}

function DockTitle({ title }) {
  return (
    <div className="flex items-center h-[22px] shrink-0 pl-0.5 pr-0.5">
      <h2 className="flex-1">{title}</h2>
      <button aria-label="float" className="w-[14px] h-3">
        <svg viewBox="0 0 12 12" className="w-3 h-3" fill="none" stroke="#666"><rect x=".5" y=".5" width="11" height="11" rx="2" /><path d="M5 2.500h4.500V7H8M2.500 5H7v4.500H2.500z" /></svg>
      </button>
      <button aria-label="close" className="w-3 h-3">
        <svg viewBox="0 0 12 12" className="w-3 h-3" fill="none" stroke="#666"><rect x=".5" y=".5" width="11" height="11" rx="2" /><path d="M3 3l6 6M9 3L3 9" strokeWidth="2.200" stroke="#555" /></svg>
      </button>
    </div>
  );
}

function MiniBar({ items, className = '' }) {
  return (
    <div className={`flex items-center h-[29px] shrink-0 pl-px pb-[3px] ${className}`}>
      {items.map((n, i) => {
        if (n === '|') return <span key={i} className="w-2 h-3 border-l border-[#ccc] shrink-0 ml-1 -mr-1" />;
        if (n === 'v') return <span key={i} className="w-[15px] flex justify-center"><span className="border-x-4 border-t-4 border-x-transparent border-t-[#aaa]" /></span>;
        return (
          <button key={i} aria-label={n} className="w-[25px] h-5 flex items-center justify-center">
            <Icon name={n} className={n === 'epsilon' ? 'w-4 h-4 opacity-50' : 'w-4 h-4'} />
          </button>
        );
      })}
    </div>
  );
}

function Dots({ vertical }) {
  return vertical
    ? <div className="w-px h-4 border-l border-dotted border-[#999]" />
    : <div className="h-px w-4 border-t border-dotted border-[#999]" />;
}

function Browser() {
  return (
    <section className="flex flex-col shrink-0">
      <DockTitle title="浏览器" />
      <MiniBar items={['addRect', 'refresh', 'funnel', 'collapse', 'info']} />
      <div className="h-[430px] grid grid-cols-[minmax(0,1fr)_17px] grid-rows-[minmax(0,1fr)_17px] border border-l-0 border-[#b4b4b4] bg-white">
        <ul className="overflow-hidden">
          {browserItems.map(([icon, text, kids]) => (
            <li key={text} className="flex items-center h-[22px] pl-[9px] whitespace-nowrap">
              <Arrow show={kids} />
              <Icon name={icon} className="w-5 h-5 ml-[13px] mr-1.5" />
              <span>{text}</span>
            </li>
          ))}
        </ul>
        <div className="flex flex-col border-l border-[#b4b4b4] bg-[#f6f6f6]">
          <button aria-label="up" className="h-4 border-b border-[#b4b4b4] flex items-center justify-center"><span className="border-x-[5px] border-b-[5px] border-x-transparent border-b-[#555]" /></button>
          <div className="flex-1" />
          <div className="h-[39px] border-t border-[#b4b4b4] bg-[#e2e2e2]" />
          <button aria-label="down" className="h-4 border-t border-[#b4b4b4] flex items-center justify-center"><span className="border-x-[5px] border-t-[5px] border-x-transparent border-t-[#555]" /></button>
        </div>
        <div className="flex border-t border-[#b4b4b4] bg-[#f8f8f8]">
          <button aria-label="left" className="w-4 border-r border-[#b4b4b4] flex items-center justify-center"><span className="border-y-[5px] border-r-[5px] border-y-transparent border-r-[#555]" /></button>
          <div className="flex-1" />
          <div className="w-[3px] border-x border-[#b4b4b4] bg-[#e2e2e2]" />
          <button aria-label="right" className="w-4 flex items-center justify-center"><span className="border-y-[5px] border-l-[5px] border-y-transparent border-l-[#555]" /></button>
        </div>
        <div className="border-t border-l border-[#b4b4b4] bg-[#efefef]" />
      </div>
    </section>
  );
}

function Check({ id }) {
  const [on, setOn] = useState(true);
  return (
    <span className="grid shrink-0 w-[17px] h-[17px]">
      <input id={id} type="checkbox" checked={on} onChange={() => setOn(!on)} className="appearance-none col-start-1 row-start-1 bg-white border border-[#b4b4b4]" />
      {on && <svg viewBox="0 0 16 16" className="col-start-1 row-start-1 w-full h-full pointer-events-none"><path d="M3.500 8l3 4.500L12 4" fill="none" stroke="#000" strokeWidth="2" /></svg>}
    </span>
  );
}

function Layers() {
  return (
    <section className="relative flex flex-col flex-1 min-h-0">
      <DockTitle title="图层" />
      <MiniBar items={['brush', 'addGroup', 'eye', 'funnel', 'epsilon', 'v', 'expand', 'collapse', 'removeRect']} />
      <ul className="flex-1 border border-l-0 border-[#b4b4b4] bg-white">
        {[['历下区边界', 'bg-[#7d8b8f]', ''], ['市中区边界', 'bg-[#85b66f]', 'underline decoration-1 underline-offset-2']].map(([name, fill, line]) => (
          <li key={name} className="flex items-center h-[21px] pl-[27px] pr-4">
            <Check id={name} />
            <span className={`w-[18px] h-[18px] ml-1.5 mr-1.5 border border-[#333] ${fill}`} />
            <label htmlFor={name} className={`flex-1 font-bold ${line}`}>{name}</label>
            <button aria-label="crs" className="w-[18px] h-[18px] rounded-sm border border-[#e2e2e2] bg-[#f6f6f6] text-[13px] leading-4 font-bold text-[#555]">?</button>
          </li>
        ))}
      </ul>
      <div className="absolute left-[15px] top-[34px] w-[199px] h-[92px] border-3 border-[#fb3838] pointer-events-none" />
    </section>
  );
}

/* ---------- map canvas ---------- */

const westFill = 'M5 243L18 232 22 222 35 220 38 214 50 215 52 208 66 207 70 198 92 200 104 193 108 184 112 178 114 166 110 158 120 156 158 156 162 204 296 182 308 188 316 198 320 212 340 214 340 234 380 236 382 242 396 242 400 240 400 230 406 240 410 234 418 239 430 242 448 246 458 254 466 258 482 254 506 242 516 230 526 224 536 222 550 225 566 234 578 234 584 225 586 210 584 198 572 190 568 176 566 160 558 154 550 150 550 124 542 120 536 108 526 104 506 102 502 96 506 94 588 98 590 76 600 84 624 86 628 84 668 82 672 92 682 92 684 100 696 106 706 100 712 98 714 84 734 82 742 78 744 62 752 50 756 52 750 58 747 68 746 98 754 96 770 96 772 104 768 110 778 112 778 146 814 146 820 138 830 146 840 148 846 138 846 122 850 116 876 116 898 108 904 116 904 124 888 130 890 140 896 152 906 158 912 164 952 166 956 164 952 130 950 100 962 100 972 102 977 98 977 70';
const westSouth = 'M1200 670L1190 668 1150 672 1130 686 1066 704 1060 708 1026 722 1022 732 974 746 952 772 950 782 966 800 970 822 966 822 962 810 942 812 938 828 928 828 848 814 822 822 800 838 768 850 776 866 770 876 764 872 740 890 732 906 734 930 728 940 698 938 674 948 670 1020 606 1030 604 1010 570 988 530 992 512 1000 490 1000 448 992 420 974 384 940 366 932 316 920 298 904 294 876 286 862 262 852 262 828 236 822 230 814 248 724 254 676 266 626 284 596 316 580 380 574 386 566 372 552 344 546 320 526 274 518 230 474 204 450 154 416 82 354 56 316 22 298 5 290';
const westLines = [
  'M578 234L588 246 598 242 602 248 666 256 670 210 680 206 704 208 708 234 728 240 752 228 782 206 800 202 820 206 818 214 826 218 830 244 860 244 880 232 908 224',
  'M670 208L670 196 680 196 682 206',
  'M778 146L778 160 770 164 754 178 750 186 754 208 766 212 770 202 782 206',
  'M912 164L902 178 902 200 908 222 914 236 940 234 942 252 974 256 978 274 974 296 986 330 986 364 956 382 954 396 946 398 930 416 908 426 894 440 876 436 862 424 856 390 830 404 838 420 820 428 806 420 796 414 796 396 790 398 710 388 700 378',
  'M602 248L602 276 620 280 634 300 650 310 660 334 700 378 712 386 704 380 686 396 680 410 646 424 640 432 636 430 600 430 580 416 542 408 532 392 496 404 448 402 434 418 410 414 412 428 424 428 424 436 410 432 408 466 360 484 346 500 324 528',
  'M908 426L916 440 908 474 892 486 848 502 822 542 822 552 878 572 888 598 880 606 848 618 846 670 840 698 776 728 776 804 802 836',
];
const eastNorth = 'M32 370L25 362 30 358 34 344 42 320 38 316 42 304 38 300 44 290 42 264 74 258 82 256 90 248 98 254 108 256 156 262 186 272 196 282';
const eastSouth = 'M870 700L852 708 849 718 849 732 873 747 900 754 912 768 916 784 924 798 934 802 952 816 975 837 999 846 1029 843 1036 860 1038 891 1050 915 1053 939 1048 962 1029 987 1002 999 975 993 945 1002 915 1014 891 1018 849 999 820 1006 774 1026 720 1014 684 1002 660 975 639 963 633 942 609 930 585 891 567 870 570 834 582 813 540 807 510 810 486 831 460 838 435 843 411 828 375 810 345 828 327 861 300 862 270 876 246 879 258 903 279 924 267 960 255 970';
const divide = '196 282L196 370 190 372 188 386 192 400 188 410 190 430 186 446 184 458 220 458 232 454 240 440 276 450 298 458 330 468 332 476 350 480 362 490 374 498 390 492 404 492 414 502 426 494 440 482 456 475 466 478 480 484 492 496 512 502 516 520 546 550 610 616 618 648 656 640 684 656 758 656 810 688 838 682 856 686 870 700';
const greyNorth = 'M870 700L890 694 920 662 922 600 920 560 930 540 968 524 968 518 940 508 906 490 892 466 898 460 894 446 898 430 896 384 898 374 914 368 914 354 890 350 888 336 910 330 912 308 936 298 906 254 932 234 940 242 988 240 992 262 1012 272 1048 276 1064 280 1086 310 1118 318 1154 312 1162 300 1160 288 1144 278 1134 246 1118 236 1114 216 1094 216 1120 210 1118 184 1102 180 1092 170 1098 150 1092 124 1102 114 1102 98 1080 84 1084 26 1066 26 1060 66 1042 64 1036 38 1018 40 1022 62 1016 76 994 84 988 92 990 70 980 66 976 52 940 40 938 16 866 28 828 24 810 20 814 32 798 36 768 28 766 14 694 36 696 106 690 110 684 104 660 108 634 114 630 120 636 126 636 152 628 158 634 160 634 176 652 176 650 192 608 186 604 222 578 236 574 226 568 236 568 252 554 258 552 268 538 268 524 262 512 250 486 250 440 248 438 240 426 230 428 220 436 218 436 186 428 178 416 144 412 140 390 146 386 158 376 160 374 178 366 180 362 194 344 194 340 180 330 170 296 176 296 196 250 198 216 202 204 218 202 262 190 260 192 276 196 282';
const eastLines = [
  'M108 256L110 310 118 314 150 306', 'M156 262L148 280 150 310 164 330 170 370', 'M42 322L118 314', 'M32 370L196 370', 'M32 370L32 402',
  'M28 402L28 424 48 424 54 412 62 420 94 424 96 440 122 442 154 454 154 468 182 468 184 460',
  'M96 440L102 480 120 532 98 536 94 562 38 548 30 560M36 574L104 578 120 594 122 612 158 622 190 626',
  'M5 466L22 482 34 476 64 476 66 460 76 460 76 472 84 474 84 458M84 478L102 478',
  'M154 468L138 490 140 530 160 532 160 540 180 542 174 562 194 566 188 608 218 612 232 612 232 606 214 604 226 598 240 564 270 520 292 480 298 458',
  'M414 500L404 552 346 562 328 574 328 594 308 606 304 628 244 644 242 670',
  'M190 610L192 640 186 670 280 670 280 688 304 684 320 694 312 720 321 771 330 800 345 828',
  'M196 282L202 292 260 290 270 292 310 290', 'M266 292L272 310 266 330 262 380 254 410 266 414 262 424 272 440 276 450',
  'M296 198L288 210 264 222 250 234 254 250 256 290', 'M296 198L314 204 324 222 322 260 316 272 310 290 314 300 308 318 328 326 346 330',
  'M324 222L348 226 360 246 378 246 380 234 392 232 402 222 388 210 396 206 414 208 416 196 392 192 394 184 428 178',
  'M378 246L370 266 352 280 360 290 346 306 346 330 328 330 326 372 340 384 360 386 372 402 390 406 392 432 360 448 356 462 362 490',
  'M366 268L384 274 400 292 420 290 432 298 446 296 436 280 442 250',
  'M440 290L450 300 440 310 452 320 444 346 450 378 464 382 480 376 496 382 524 354 528 340 538 270',
  'M486 250L488 364 500 374', 'M464 382L462 402 482 432 476 460 466 478',
  'M696 106L728 116 764 110 764 122 802 122 804 98 824 94 830 78 856 72 892 80 898 92 942 92 942 118', 'M920 18L922 56 936 68 942 92',
  'M728 116L738 162 718 166 718 172 732 184 752 184 758 202 768 212 770 240 780 256 778 288 758 288 758 308 734 314 650 336 660 346 652 354 640 378 636 390 612 418 628 440 618 480 580 492 564 540 546 550',
  'M780 256L790 254 808 268 812 304 862 308 860 326 846 350 842 376 896 384', 'M992 84L996 132 978 136 980 152 974 158 988 240',
];

function MapCanvas() {
  return (
    <main className="flex-1 min-w-0 mt-px border border-[#b4b4b4] bg-white overflow-hidden">
      <svg viewBox="262 177 1009 697" className="w-full h-full" strokeLinejoin="round" role="img" aria-label="map">
        <g transform="translate(260 380) scale(.33333)">
          <path d={`${westFill}L1130 70 1130 158 1200 158 ${westSouth.replace('M', 'L')}Z`} fill={GREEN} />
        </g>
        <g transform="translate(575 280) scale(.33333)" stroke="#232323" strokeWidth="3.600" fill="none">
          <path d={`${eastNorth}L${divide}${eastSouth.replace('M', 'L')}Z`} fill={GREEN} stroke="none" />
          <path d={`${greyNorth}L${divide}Z`} fill={GREY} />
          <path d={eastNorth} />
          <path d={eastSouth} />
          {eastLines.map(d => <path key={d} d={d} />)}
        </g>
        <g transform="translate(260 380) scale(.33333)" stroke="#232323" strokeWidth="3.600" fill="none">
          <path d={westFill} />
          <path d={westSouth} />
          {westLines.map(d => <path key={d} d={d} />)}
        </g>
      </svg>
    </main>
  );
}

function SearchGlyph() {
  return <svg viewBox="0 0 16 16" className="w-4 h-4 shrink-0" fill="none" stroke="#888" strokeWidth="1.500"><circle cx="6.500" cy="6.500" r="5" /><path d="M10 10l5 5" strokeWidth="2" /></svg>;
}

function Toolbox() {
  return (
    <section className="w-[256px] shrink-0 flex flex-col">
      <div className="pl-0.5"><DockTitle title="工具箱" /></div>
      <div className="pl-0.5"><MiniBar items={['models', 'pyMenu', 'clock', 'doc', '|', 'editNote', '|', 'wrench']} /></div>
      <label className="flex items-center h-[26px] shrink-0 border border-[#b4b4b4] rounded-sm bg-white pl-[9px] gap-2">
        <SearchGlyph />
        <input placeholder="搜索..." className="flex-1 min-w-0 outline-none font-['Liberation_Mono','Noto_Sans_CJK_SC',monospace] text-[15px] placeholder:text-[#808080]" />
      </label>
      <ul className="flex-1 min-h-0 overflow-hidden border border-[#b4b4b4] bg-white">
        {toolboxItems.map(([icon, text]) => (
          <li key={text} className="flex items-center h-[22px] pl-[10px] whitespace-nowrap">
            <Arrow show />
            <Icon name={icon} className={icon === 'logo' || icon === 'clock' ? 'w-[18px] h-[18px] ml-[14px] mr-[7px]' : 'w-5 h-5 ml-[13px] mr-1.5'} />
            <span>{text}</span>
          </li>
        ))}
      </ul>
    </section>
  );
}

function Spin({ id, value, className }) {
  return (
    <span className={`flex h-6 border border-[#b4b4b4] rounded-sm bg-white overflow-hidden shrink-0 ${className}`}>
      <input id={id} defaultValue={value} className="flex-1 min-w-0 pl-1 outline-none" />
      <span className="w-4 shrink-0 flex flex-col items-center justify-evenly border-l border-[#c8c8c8] bg-[#f6f6f6]">
        <button aria-label="increase" className="border-x-[5px] border-b-[5px] border-x-transparent border-b-[#555]" />
        <button aria-label="decrease" className="border-x-[5px] border-t-[5px] border-x-transparent border-t-[#555]" />
      </span>
    </span>
  );
}

function StatusBar() {
  return (
    <footer className="relative flex items-center h-8 shrink-0 pl-0.5 pr-[30px] text-[12px] font-['Liberation_Mono','Noto_Sans_CJK_SC',monospace]">
      <label className="flex items-center w-[338px] h-[26px] border border-[#b4b4b4] rounded-sm bg-white pl-[9px] gap-2">
        <SearchGlyph />
        <input placeholder="请输入关键字查找 (Ctrl+K)" className="flex-1 min-w-0 outline-none text-[14px] placeholder:text-[#808080]" />
      </label>
      <div className="flex-1" />
      <label htmlFor="coord" className="text-[13px] mr-[3px]">坐标</label>
      <input id="coord" defaultValue="117.1274,36.7490" className="w-[127px] h-[26px] border border-[#b4b4b4] rounded-sm bg-white pl-1.5" />
      <button aria-label="extents" className="w-[18px] ml-[5px] mr-[15px]">
        <svg viewBox="0 0 18 20" className="w-[18px] h-5" fill="none" stroke="#222" strokeWidth="1.500"><path d="M2 3q0-2 3-2l5 9-4 3zM8 1q3-1 4 2l2 8-4-1zM4 13q3-4 9-2l1 4q-2 5-7 4-3-1-3-6z" fill="#999" /><circle cx="9.500" cy="15" r="2.500" fill="#fff" /><path d="M14 4l3-3M15 8l2-1" strokeDasharray="1.500 1" /></svg>
      </button>
      <label htmlFor="scale" className="text-[13px] mr-[3px]">比例</label>
      <span className="grid items-center w-[104px] h-6 border border-[#b4b4b4] rounded-sm bg-white">
        <select id="scale" className="col-start-1 row-start-1 h-full appearance-none pl-[3px] outline-none"><option>1:159984</option></select>
        <span className="col-start-1 row-start-1 justify-self-end mr-2 border-x-[5px] border-t-[5px] border-x-transparent border-t-[#555] pointer-events-none" />
      </span>
      <button aria-label="lock" className="ml-3 mr-[9px]">
        <svg viewBox="0 0 16 19" className="w-4 h-[19px]"><path d="M4 9V5q0-4 4-4t4 4v4" fill="none" stroke="#8a8a8a" strokeWidth="2" /><rect x=".5" y="9" width="15" height="10" rx="1" fill="#666" /></svg>
      </button>
      <label htmlFor="mag" className="text-[13px] mr-[3px]">放大镜</label>
      <Spin id="mag" value="100%" className="w-[105px]" />
      <label htmlFor="rot" className="text-[13px] ml-[9px] mr-[9px]">旋转角度</label>
      <Spin id="rot" value="0.0°" className="w-[101px]" />
      <span className="ml-[6px] mr-[6px] flex"><Check id="render" /></span>
      <label htmlFor="render" className="text-[13px]">渲染</label>
      <button className="flex items-center ml-[15px] gap-px">
        <svg viewBox="0 0 20 18" className="w-5 h-[18px]" stroke="#efefef"><path d="M5 1h10l4 6-2 7-7 4-7-4-2-7z" fill="#777" stroke="#777" /><path d="M1 7h18M3 13h14M7 1L6 9l4 8 4-8-1-8" fill="none" /></svg>
        EPSG:4490
      </button>
      <button aria-label="messages" className="ml-[29px]">
        <svg viewBox="0 0 20 20" className="w-5 h-5"><path d="M10 1q9 0 9 8 0 4-3 6l1 4-5-3Q1 17 1 9q0-8 9-8z" fill="#666" /><circle cx="6" cy="9" r="1.300" fill="#fff" /><circle cx="10" cy="9" r="1.300" fill="#fff" /><circle cx="14" cy="9" r="1.300" fill="#fff" /></svg>
      </button>
      <span className="absolute right-3 top-0 text-[18px] leading-7 text-[#808080]/70 whitespace-nowrap pointer-events-none font-['Liberation_Sans','Noto_Sans_CJK_SC',sans-serif]">CSDN @木卯个亍</span>
    </footer>
  );
}

export default function App() {
  return (
    <div className="flex h-screen overflow-hidden bg-[#efefef] text-[15px] leading-5 text-black font-['Noto_Sans','Noto_Sans_CJK_SC',sans-serif]">
      <div className="flex-1 min-w-0 flex flex-col">
        <header className="flex items-center h-[34px] shrink-0 bg-white pl-[7px]">
          <Icon name="logo" className="w-5 h-5 mb-1" />
          <h1 className="flex-1 ml-[5px] pb-1 self-center">*未命名的工程 — QGIS</h1>
          <div className="flex pb-1">
            <button aria-label="minimize" className="w-[58px] h-6 flex items-center justify-center"><span className="w-3 h-px bg-black" /></button>
            <button aria-label="maximize" className="w-[58px] h-6 flex items-center justify-center"><span className="w-3 h-3 border border-black" /></button>
            <button aria-label="close" className="w-[60px] h-6 flex items-center justify-center">
              <svg viewBox="0 0 12 12" className="w-3 h-3" stroke="#000"><path d="M0 0l12 12M12 0L0 12" /></svg>
            </button>
          </div>
        </header>
        <nav className="flex items-center h-[25px] shrink-0 border-b border-[#d4d4d4] pl-px">
          {menus.map(([name, key]) => <button key={key} className="px-2 whitespace-nowrap">{name}(<u className="underline-offset-2">{key}</u>)</button>)}
        </nav>
        <Toolbar items={row1} />
        <Toolbar items={row2} />
        <Toolbar items={row3} height="h-[38px]" />
        <div className="flex-1 min-h-0 flex">
          <aside className="w-[254px] shrink-0 flex flex-col">
            <Browser />
            <div className="h-[6px] shrink-0 flex justify-center items-center"><Dots /></div>
            <Layers />
          </aside>
          <div className="w-[7px] shrink-0 flex items-center justify-center"><Dots vertical /></div>
          <MapCanvas />
          <div className="w-[7px] shrink-0 flex items-center justify-center"><Dots vertical /></div>
          <Toolbox />
        </div>
        <StatusBar />
      </div>
      <div className="w-1 shrink-0 border-l border-[#777] bg-linear-to-b from-[#e8e8e8] via-[#c8c8c8] to-[#dcdcdc]" />
    </div>
  );
}
